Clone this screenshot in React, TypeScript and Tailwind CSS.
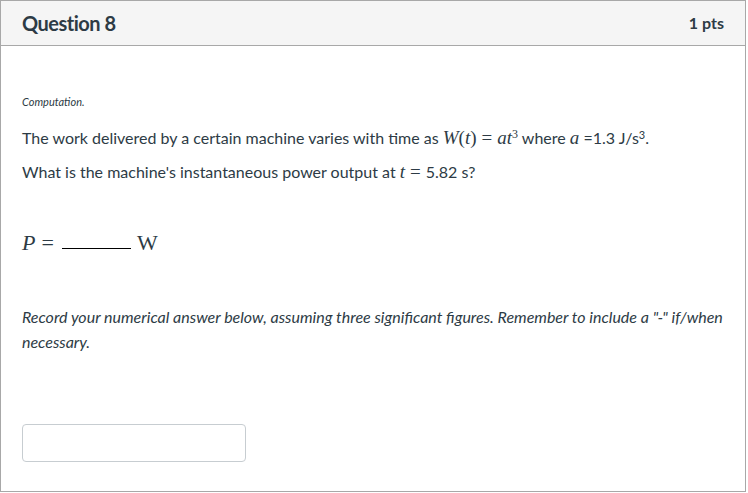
export default function App() {
  const body = "font-['Lato','Liberation_Sans',sans-serif] text-[#2d3b45]";
  const serif = "font-['Liberation_Serif',serif]";
  return (
    <div className={`w-[746px] h-[492px] border border-[#a8a8a8] bg-white flex flex-col ${body}`}>
      <div className="h-[45px] shrink-0 bg-[#f5f5f5] border-b border-[#a8a8a8] flex items-center justify-between px-[21px]">
        <h2 className="text-[20px] font-bold tracking-[-0.5px]">Question 8</h2>
        <span className="text-[16px] font-bold">1 pts</span>
      </div>
      <div className="px-[21px] pt-[49px]">
        <p className="text-[11px] italic leading-[13px]">Computation.</p>
        <p className="text-[16px] leading-[24px] mt-[18px]">
          The work delivered by a certain machine varies with time as{' '}
          <span className={`${serif} text-[19px]`}>
            <i>W</i>(<i>t</i>)<span className="mx-[5px]">=</span><i>at</i><sup className="text-[12px]">3</sup>
          </span>{' '}
          where <i className={`${serif} text-[19px]`}>a</i> =1.3 J/s<sup className="text-[11px]">3</sup>.
        </p>
        <p className="text-[16px] leading-[24px] mt-[10px]">
          What is the machine's instantaneous power output at{' '}
          <span className={`${serif} text-[19px]`}>
            <i>t</i><span className="mx-[5px]">=</span>
          </span>
          5.82 s?
        </p>
        <p className={`mt-[46px] text-[22px] leading-[26px] flex items-end ${serif}`}>
          <span className="italic">P</span>
          <span className="ml-[6px]">=</span>
          <span className="inline-block w-[69px] border-b border-black ml-[8px] mb-[7px]" />
          <span className="ml-[6px]">W</span>
        </p>
        <p className="text-[16px] italic leading-[25px] mt-[48px]">
          Record your numerical answer below, assuming three significant figures. Remember to include a "-" if/when necessary.
        </p>
        <input
          type="text"
          className="mt-[70px] w-[224px] h-[38px] border border-[#c7cdd1] rounded-[4px] px-2 outline-none"
        />
      </div>
    </div>
  );
}
